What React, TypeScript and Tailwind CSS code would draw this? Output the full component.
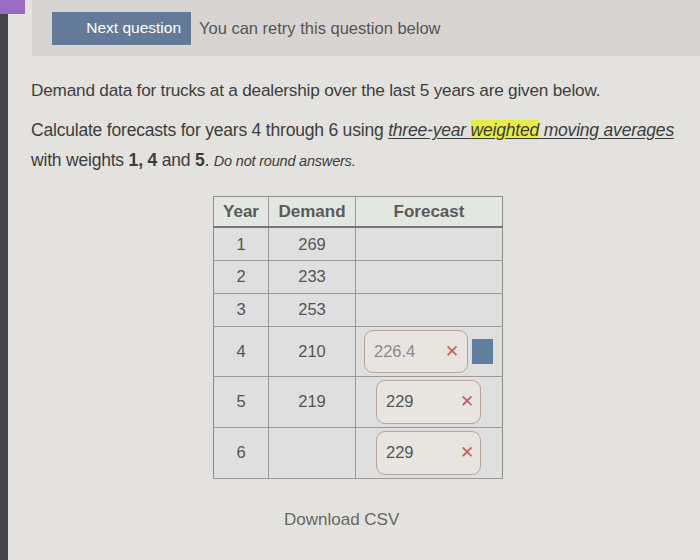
import React from 'react';

const rows = [
  { year: 1, demand: '269' },
  { year: 2, demand: '233' },
  { year: 3, demand: '253' },
];

const answers = [
  { year: 5, demand: '219', value: '229' },
  { year: 6, demand: '', value: '229' },
];

const Cross = () => <span className="text-[17px] leading-none text-[#c0625c]">✕</span>;

export default function App() {
  return (
    <div className="relative flex h-[560px] w-[700px] overflow-hidden bg-[#e4e2de] font-['Liberation_Sans',Arial,sans-serif] text-[#3f3f3f]">
      {/* purple tab in the corner */}
      <div className="absolute left-0 top-0 h-[14px] w-[25px] bg-[#9b6bc4]" />
      <div className="w-[8px] shrink-0 bg-[#46454b]" />

      <div className="flex flex-1 flex-col">
        {/* Top bar */}
        <div className="ml-[24px] flex h-[56px] items-center gap-[8px] bg-[#d8d4d1] pl-[20px]">
          <div className="flex h-[33px] w-[139px] items-center justify-end bg-[#637b99] pr-[10px] text-[15.5px] text-white">
            Next question
          </div>
          <span className="text-[16.5px] text-[#555]">You can retry this question below</span>
        </div>

        {/* Question */}
        <div className="pl-[23px] pt-[22px]">
          <p className="text-[17.2px] tracking-[-0.2px] text-[#3d3d3d]">
            Demand data for trucks at a dealership over the last 5 years are given below.
          </p>
          <p className="mt-[11px] text-[17.5px] leading-[30px] tracking-[-0.2px] text-[#3d3d3d]">
            Calculate forecasts for years 4 through 6 using{' '}
            <span className="italic underline underline-offset-2">
              three-year <span className="bg-[#e6ec4a]">weighted</span> moving averages
            </span>
            <br />
            with weights <b>1, 4</b> and <b>5</b>.{' '}
            <span className="text-[14.5px] italic">Do not round answers.</span>
          </p>
        </div>

        {/* Table */}
        <div className="ml-[205px] mt-[20px] w-[290px]">
          <table className="w-full border-collapse border border-[#8d8d8d] text-[16.5px] text-[#555]">
            <thead>
              <tr className="h-[31px] border-b-2 border-[#777] bg-[#e3e7e1] text-[17px] font-bold text-[#5a5a5a]">
                <th className="w-[55px] border-r border-[#9a9a9a] font-bold">Year</th>
                <th className="w-[87px] border-r border-[#9a9a9a] font-bold">Demand</th>
                <th className="font-bold">Forecast</th>
              </tr>
            </thead>
            <tbody className="bg-[#e0dfdf]">
              {rows.map((r) => (
                <tr key={r.year} className="h-[33px] border-b border-[#9a9a9a]">
                  <td className="border-r border-[#9a9a9a] text-center">{r.year}</td>
                  <td className="border-r border-[#9a9a9a] text-center">{r.demand}</td>
                  <td />
                </tr>
              ))}
              <tr className="h-[50px] border-b border-[#9a9a9a]">
                <td className="border-r border-[#9a9a9a] text-center">4</td>
                <td className="border-r border-[#9a9a9a] text-center">210</td>
                <td className="pl-[8px]">
                  <div className="flex items-center gap-[4px]">
                    <div className="flex h-[43px] w-[104px] items-center justify-between rounded-[9px] border border-[#b9a39b] bg-[#e8e5e0] pl-[9px] pr-[8px]">
                      <span className="text-[#8a8a8a]">226.4</span>
                      <Cross />
                    </div>
                    <div className="h-[25px] w-[21px] bg-[#5f7fa0]" />
                  </div>
                </td>
              </tr>
              {answers.map((a) => (
                <tr key={a.year} className="h-[51px] border-b border-[#9a9a9a]">
                  <td className="border-r border-[#9a9a9a] text-center">{a.year}</td>
                  <td className="border-r border-[#9a9a9a] text-center">{a.demand}</td>
                  <td className="pl-[20px]">
                    <div className="flex h-[44px] w-[105px] items-center justify-between rounded-[9px] border border-[#b9a39b] bg-[#e8e5e0] pl-[9px] pr-[6px]">
                      <span>{a.value}</span>
                      <Cross />
                    </div>
                  </td>
                </tr>
              ))}
            </tbody>
          </table>
        </div>

        <div className="ml-[276px] mt-[28px] text-[17px] text-[#666]">Download CSV</div>
      </div>
    </div>
  );
}
